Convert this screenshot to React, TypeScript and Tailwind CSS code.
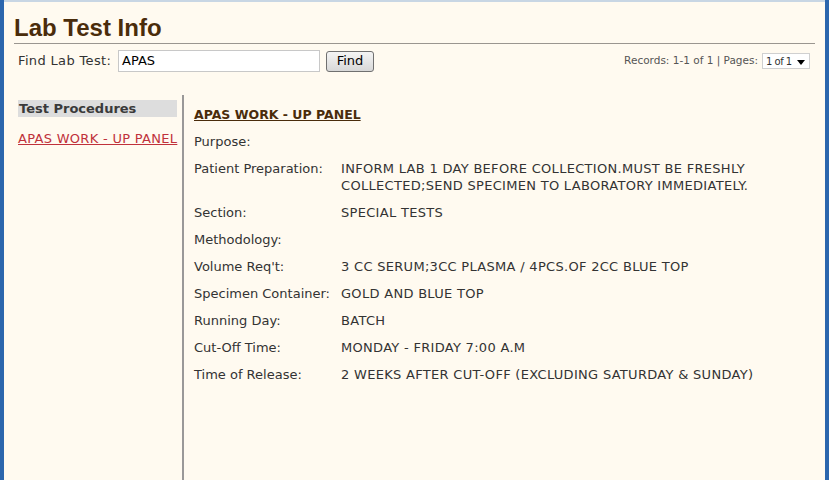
import React from "react";

const rows: { label: string; value: React.ReactNode }[] = [
  { label: "Purpose:", value: "" },
  {
    label: "Patient Preparation:",
    value: (
      <>
        INFORM LAB 1 DAY BEFORE COLLECTION.MUST BE FRESHLY
        <br />
        COLLECTED;SEND SPECIMEN TO LABORATORY IMMEDIATELY.
      </>
    ),
  },
  { label: "Section:", value: "SPECIAL TESTS" },
  { label: "Methodology:", value: "" },
  { label: "Volume Req't:", value: "3 CC SERUM;3CC PLASMA / 4PCS.OF 2CC BLUE TOP" },
  { label: "Specimen Container:", value: "GOLD AND BLUE TOP" },
  { label: "Running Day:", value: "BATCH" },
  { label: "Cut-Off Time:", value: "MONDAY - FRIDAY 7:00 A.M" },
  { label: "Time of Release:", value: "2 WEEKS AFTER CUT-OFF (EXCLUDING SATURDAY & SUNDAY)" },
];

export default function App() {
  return (
    <div
      className="flex w-[829px] h-[480px] overflow-hidden bg-[#fffaf0] text-[#333333]"
      style={{ fontFamily: '"DejaVu Sans", Verdana, sans-serif' }}
    >
      <div className="w-[4px] shrink-0 bg-[#2c66ad]" />
      <div className="flex-1 flex flex-col border-t-[2px] border-[#c8d6e4] min-w-0">
        <div className="pl-[10px] pr-[10px]">
          <h1
            className="text-[24px] font-bold leading-[28px] pt-[12px] text-[#4a2c0b]"
            style={{ fontFamily: '"Liberation Sans", Arial, sans-serif' }}
          >
            Lab Test Info
          </h1>
          <div className="h-[1px] bg-[#9a9690] mt-[1px]" />
          <div className="flex items-center h-[26px] mt-[4px]">
            <span className="pl-[4px] text-[13px] tracking-[0.35px] w-[104px]">Find Lab Test:</span>
            <div className="w-[202px] h-[22px] border border-[#c8c8c8] bg-white flex items-center px-[3px] text-[13px] text-black">
              APAS
            </div>
            <button
              className="ml-[6px] w-[48px] h-[21px] border border-[#707070] rounded-[3px] bg-gradient-to-b from-[#f4f4f4] to-[#d8d8d8] text-[13px] text-black flex items-center justify-center"
              style={{ fontFamily: '"DejaVu Sans", Verdana, sans-serif' }}
            >
              Find
            </button>
            <div className="flex-1" />
            <span className="text-[10.5px] text-[#555555] mr-[4px]">Records: 1-1 of 1 | Pages:</span>
            <div className="w-[48px] h-[16px] border border-[#d0d0d0] bg-white flex items-center text-[10px] text-[#333] pl-[3px] mr-[5px]">
              <span className="tracking-[-0.5px]">1 of 1</span>
              <div className="flex-1" />
              <svg width="8" height="5" viewBox="0 0 8 5" className="mr-[4px] mt-[3px]">
                <path d="M0 0 L8 0 L4 5 Z" fill="#000" />
              </svg>
            </div>
          </div>
        </div>
        <div className="flex flex-1 mt-[21px] pl-[10px]">
          <div className="w-[168px] shrink-0 pt-[5px] pl-[4px] pr-[5px]">
            <div className="bg-[#dddddd] h-[17px] flex items-center pl-[1px] text-[13px] font-bold text-[#3a3a3a]">
              Test Procedures
            </div>
            <a
              href="#"
              className="block mt-[13px] text-[13px] tracking-[0.3px] text-[#c0313b] underline leading-[17px] whitespace-nowrap"
            >
              APAS WORK - UP PANEL
            </a>
          </div>
          <div className="w-[2px] bg-[#9a9898] shrink-0" />
          <div className="pl-[10px] pt-[11px] text-[13px] leading-[17px]">
            <div className="font-bold underline text-[#4a2c0b] mb-[10px] text-[12.5px]">APAS WORK - UP PANEL</div>
            {rows.map((r) => (
              <div key={r.label} className="flex mb-[10px]">
                <div className="w-[147px] shrink-0">{r.label}</div>
                <div className="tracking-[0.3px] whitespace-nowrap">{r.value}</div>
              </div>
            ))}
          </div>
        </div>
      </div>
      <div className="w-[4px] shrink-0 bg-[#2c66ad]" />
    </div>
  );
}
